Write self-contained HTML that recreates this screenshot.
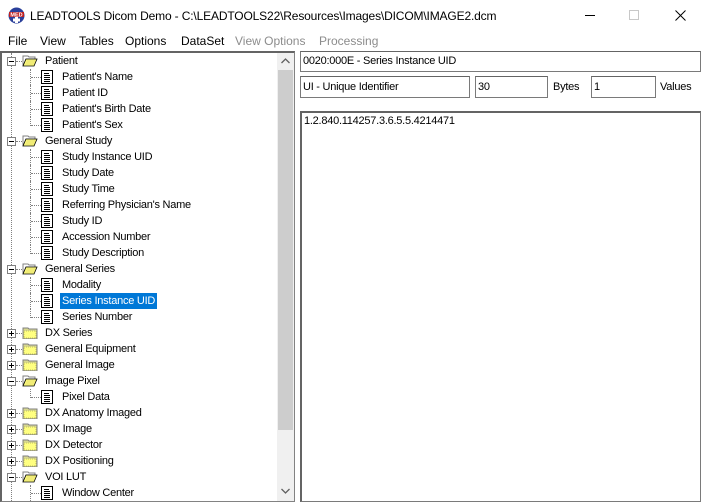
<!DOCTYPE html>
<html><head><style>
*{margin:0;padding:0;box-sizing:border-box}
body{width:704px;height:502px;background:#fff;position:relative;overflow:hidden;font-family:"Liberation Sans",sans-serif;font-size:12px;color:#000}
.a{position:absolute}
.t{font-size:12px;white-space:nowrap;line-height:16px}
.row{position:absolute;left:0;height:16px;width:276px}
.exp{position:absolute;left:7px;top:4px;width:9px;height:9px;border:1px solid #808080;background:#fff}
.exp:before{content:"";position:absolute;left:1px;top:3px;width:5px;height:1px;background:#000}
.exp.p:after{content:"";position:absolute;left:3px;top:1px;width:1px;height:5px;background:#000}
.hl{position:absolute;left:16px;top:8px;width:6px;border-top:1px dotted #808080}
.fold{position:absolute;left:22px;top:2px;width:16px;height:12px}
.doc{position:absolute;left:41px;top:1px;width:12px;height:14px;border:1px solid #000;background:#fff}
.doc i{position:absolute;left:2px;width:6px;height:1px;background:#000}
.vl{position:absolute;left:30px;top:0;height:16px;border-left:1px dotted #808080}
.vl.last{height:9px}
.ch{position:absolute;left:31px;top:8px;width:10px;border-top:1px dotted #808080}
.lab{position:absolute;top:0;line-height:16px;white-space:nowrap;padding:0 2px;font-size:11px;letter-spacing:-0.25px}
.box{position:absolute;border:1px solid #7a7a7a;border-top-color:#646464;background:#fff;padding:0 2px;line-height:18px;white-space:nowrap;font-size:11px;letter-spacing:-0.25px}
.t2{font-size:11px;letter-spacing:-0.25px}
</style></head><body>
<svg class="a" style="left:8px;top:7px" width="17" height="17" viewBox="0 0 17 17"><circle cx="8.5" cy="8.5" r="8" fill="#2a3f9a"/><rect x="1" y="5" width="15" height="5" fill="#c02020"/><text x="8.5" y="9.5" font-size="5.5" fill="#fff" text-anchor="middle" font-family="Liberation Sans" font-weight="bold">MED</text><rect x="7" y="10" width="3" height="6" fill="#fff"/><rect x="5" y="11.5" width="7" height="3" fill="#fff"/></svg>
<div class="a t" style="left:30px;top:8px;letter-spacing:-0.15px">LEADTOOLS Dicom Demo - C:\LEADTOOLS22\Resources\Images\DICOM\IMAGE2.dcm</div>
<div class="a" style="left:585px;top:15px;width:10px;height:1px;background:#000"></div>
<div class="a" style="left:629px;top:10px;width:10px;height:10px;border:1px solid #c8c8c8"></div>
<svg class="a" style="left:675px;top:10px" width="11" height="11"><path d="M0.5 0.5L10.5 10.5M10.5 0.5L0.5 10.5" stroke="#000" stroke-width="1"/></svg>
<div class="a t" style="left:8px;top:33px">File</div>
<div class="a t" style="left:40px;top:33px">View</div>
<div class="a t" style="left:79px;top:33px">Tables</div>
<div class="a t" style="left:125px;top:33px">Options</div>
<div class="a t" style="left:181px;top:33px">DataSet</div>
<div class="a t" style="left:235px;top:33px;color:#8c8c8c">View Options</div>
<div class="a t" style="left:319px;top:33px;color:#8c8c8c">Processing</div>
<div class="a" style="left:0;top:51px;width:295px;height:451px;border:1px solid #828282;border-top:2px solid #646464;border-left:2px solid #646464;overflow:hidden">
<div class="a" style="left:9px;top:0;height:460px;border-left:1px dotted #808080"></div>
<div id="tree" class="a" style="left:-2px;top:0">
</div>
<div class="a" style="left:275px;top:0;width:17px;height:449px;background:#f0f0f0"></div>
<div class="a" style="left:276px;top:17px;width:15px;height:360px;background:#cdcdcd"></div>
<svg class="a" style="left:279px;top:5px" width="9" height="6"><path d="M0.5 5L4.5 1L8.5 5" stroke="#606060" fill="none" stroke-width="1.3"/></svg>
<svg class="a" style="left:279px;top:435px" width="9" height="6"><path d="M0.5 1L4.5 5L8.5 1" stroke="#606060" fill="none" stroke-width="1.3"/></svg>
</div>
<div class="box" style="left:300px;top:51px;width:401px;height:21px">0020:000E - Series Instance UID</div>
<div class="box" style="left:300px;top:76px;width:170px;height:22px;line-height:20px">UI - Unique Identifier</div>
<div class="box" style="left:475px;top:76px;width:73px;height:22px;line-height:20px">30</div>
<div class="a t t2" style="left:553px;top:79px">Bytes</div>
<div class="box" style="left:591px;top:76px;width:65px;height:22px;line-height:20px">1</div>
<div class="a t t2" style="left:660px;top:79px">Values</div>
<div class="box" style="left:300px;top:111px;width:401px;height:391px;border-top:2px solid #646464;border-left:2px solid #646464;line-height:16px">1.2.840.114257.3.6.5.5.4214471</div>
<script>
var rows=[["g","Patient",1],["c","Patient's Name"],["c","Patient ID"],["c","Patient's Birth Date"],["l","Patient's Sex"],
["g","General Study",1],["c","Study Instance UID"],["c","Study Date"],["c","Study Time"],["c","Referring Physician's Name"],["c","Study ID"],["c","Accession Number"],["l","Study Description"],
["g","General Series",1],["c","Modality"],["c","Series Instance UID",0,1],["l","Series Number"],
["g","DX Series",0],["g","General Equipment",0],["g","General Image",0],["g","Image Pixel",1],["l","Pixel Data"],
["g","DX Anatomy Imaged",0],["g","DX Image",0],["g","DX Detector",0],["g","DX Positioning",0],["g","VOI LUT",1],["c","Window Center"]];
var h="";
var openF='<svg class="fold" viewBox="0 0 16 12"><path d="M1 1h5l1 1h6v2H4L1 11z" fill="#fff" stroke="#808080"/><path d="M4 4h11l-3 7H1z" fill="#ffff80" stroke="#000" stroke-width="0.8"/><path d="M5 5h9l-2 5H3z" fill="#e8e070" opacity=".6"/></svg>';
var closedF='<svg class="fold" viewBox="0 0 16 12"><path d="M1 1h5l1 1h8v10H1z" fill="#d8d890" stroke="#808080"/><rect x="2" y="4" width="12" height="7" fill="#ffff80"/><rect x="2" y="4" width="12" height="7" fill="none" stroke="#c0c060" stroke-dasharray="1 1"/></svg>';
rows.forEach(function(r,i){
 var top=16*i;
 h+='<div class="row" style="top:'+top+'px">';
 if(r[0]=="g"){
  h+='<div class="hl"></div><div class="exp'+(r[2]?'':' p')+'"></div>'+(r[2]?openF:closedF)+'<div class="lab" style="left:43px">'+r[1]+'</div>';
 } else {
  h+='<div class="vl'+(r[0]=="l"?' last':'')+'"></div><div class="ch"></div><div class="doc"><i style="top:2px;width:5px"></i><i style="top:4px"></i><i style="top:6px"></i><i style="top:8px"></i><i style="top:10px"></i></div>';
  h+='<div class="lab" style="left:60px;'+(r[3]?'background:#0078d7;color:#fff;':'')+'">'+r[1]+'</div>';
 }
 h+='</div>';
});
document.getElementById("tree").innerHTML=h;
</script>
</body></html>
